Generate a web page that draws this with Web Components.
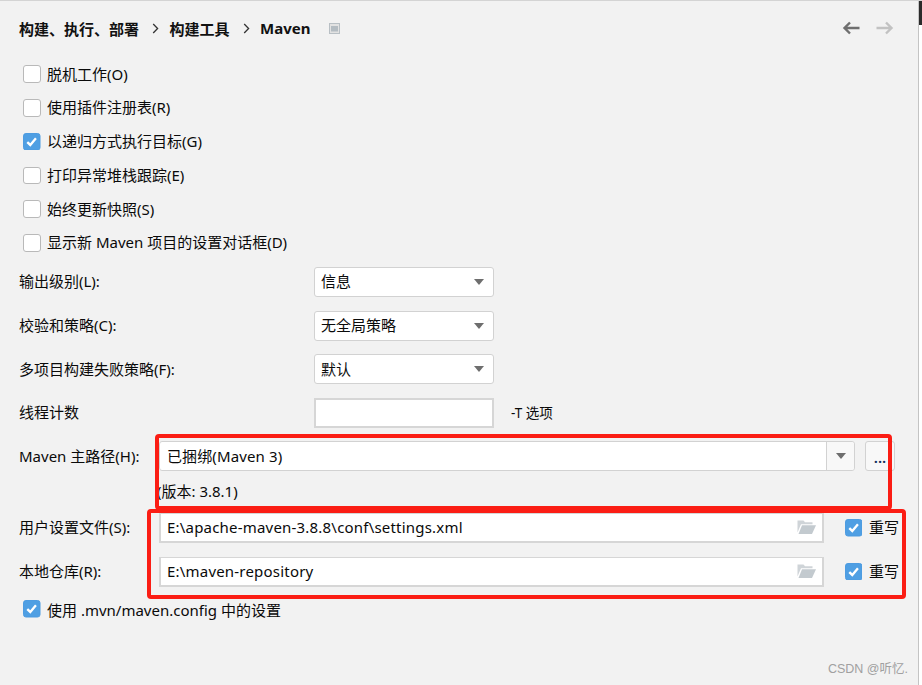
<!DOCTYPE html>
<html lang="zh"><head><meta charset="utf-8">
<style>
html,body{margin:0;padding:0;width:922px;height:685px;overflow:hidden;background:#f2f2f2}
body{font:15px "Noto Sans","Noto Sans CJK SC",sans-serif;color:#0a0a0a}
</style></head><body>
<settings-page></settings-page>
<script>
const CHECK='<svg viewBox="0 0 18 18" width="17.5" height="17.5"><rect x="0.5" y="0.5" width="17" height="17" rx="2.5" fill="#4f9fe3" stroke="#4a9ae0"/><path d="M4.4 9.3l3.1 3 5.8-6.8" fill="none" stroke="#fff" stroke-width="2.4"/></svg>';
class XCheck extends HTMLElement{
  connectedCallback(){
    const s=this.attachShadow({mode:'open'});
    const on=this.hasAttribute('checked');
    s.innerHTML=`<style>:host{display:flex;align-items:center;gap:6.5px;height:18px;white-space:nowrap}
    .b{width:17.5px;height:17.5px;flex:none;box-sizing:border-box;display:block}
    .off{background:#fff;border:1px solid #b9b9b9;border-radius:3px}
    svg{display:block}
    .x{padding-bottom:var(--tb,2px)}
    </style><span class="b ${on?'':'off'}">${on?CHECK:''}</span><span class="x"><slot></slot></span>`;
  }
}
class XCombo extends HTMLElement{
  connectedCallback(){
    const s=this.attachShadow({mode:'open'});
    s.innerHTML=`<style>:host{display:flex;box-sizing:border-box;height:30px;width:180px;background:#fff;border:1px solid #d2d2d2;border-radius:3px;align-items:center;padding:0 7px 0 6px}
    .t{flex:1;padding-bottom:2px}
    .a{width:0;height:0;border-left:5.5px solid transparent;border-right:5.5px solid transparent;border-top:6px solid #6e6e6e;margin-right:2px}
    </style><span class="t"><slot></slot></span><span class="a"></span>`;
  }
}
class XHome extends HTMLElement{
  connectedCallback(){
    const s=this.attachShadow({mode:'open'});
    s.innerHTML=`<style>:host{display:flex;box-sizing:border-box;height:30px;flex:1;background:#fff;border:1px solid #d2d2d2;border-radius:3px;align-items:stretch}
    .t{flex:1;display:flex;align-items:center;padding:0 0 2px 7px;letter-spacing:.12px}
    .d{width:27px;background:#f8f8f8;border-left:1px solid #d2d2d2;display:flex;align-items:center;justify-content:center;border-radius:0 3px 3px 0}
    .a{width:0;height:0;border-left:5.5px solid transparent;border-right:5.5px solid transparent;border-top:6px solid #6e6e6e}
    </style><span class="t"><span><slot></slot></span></span><span class="d"><span class="a"></span></span>`;
  }
}
class XPath extends HTMLElement{
  connectedCallback(){
    const s=this.attachShadow({mode:'open'});
    const plain=this.hasAttribute('plain');
    const folder=plain?'':`<svg width="19" height="14" viewBox="0 0 19 14"><path d="M0.5 13V0.5H6.5L8 2.3H15.5V4.2H4L0.5 12.5Z" fill="#cfd4d8"/><path d="M1.5 14L5 5.2H19L15 14Z" fill="#c3cacf"/></svg>`;
    s.innerHTML=`<style>:host{display:flex;box-sizing:border-box;height:30px;flex:1;background:#fff;border:1px solid #d6d6d6;border-width:${plain?'2px':'1px 2px 2px 2px'};align-items:center;padding:0 6px;letter-spacing:.2px}
    .t{flex:1}
    svg{display:block}
    </style><span class="t"><slot></slot></span>${folder}`;
  }
}
class XRow extends HTMLElement{
  connectedCallback(){
    const s=this.attachShadow({mode:'open'});
    s.innerHTML=`<style>:host{display:flex;align-items:center;height:30px}
    .l{flex:none;width:var(--label,295px);padding-bottom:2px}
    .c{flex:1;display:flex;align-items:center;min-width:0}
    </style><span class="l">${this.getAttribute('label')}</span><span class="c"><slot></slot></span>`;
  }
}
class XBreadcrumb extends HTMLElement{
  connectedCallback(){
    const s=this.attachShadow({mode:'open'});
    const chev='<svg width="7" height="11" viewBox="0 0 7 11"><path d="M1.2 1L5.6 5.5L1.2 10" fill="none" stroke="#333" stroke-width="1.3"/></svg>';
    s.innerHTML=`<style>:host{display:flex;align-items:center;height:20px;font-weight:700;font-size:15px;color:#111}
    .c{margin:0 10.5px 0 13px;display:flex}
    .p{margin-left:18.5px;display:block}
    .nav{margin-left:auto;display:flex;gap:16px;margin-right:5px}
    </style><span>构建、执行、部署</span><span class="c">${chev}</span><span>构建工具</span><span class="c">${chev}</span><span>Maven</span>
    <svg class="p" width="11" height="11" viewBox="0 0 11 11"><rect x="0.5" y="0.5" width="10" height="10" fill="#e2e2e2" stroke="#b8bfc4"/><rect x="2" y="3" width="7" height="5.5" fill="#b4bcc2"/></svg>
    <span class="nav">
    <svg width="18" height="14" viewBox="0 0 18 14"><path d="M17.5 7H2.5M8 1.5L2.5 7L8 12.5" fill="none" stroke="#6f6f6f" stroke-width="2.4"/></svg>
    <svg width="18" height="14" viewBox="0 0 18 14"><path d="M0.5 7H15.5M10 1.5L15.5 7L10 12.5" fill="none" stroke="#c2c2c2" stroke-width="2.4"/></svg>
    </span>`;
  }
}
class SettingsPage extends HTMLElement{
  connectedCallback(){
    const s=this.attachShadow({mode:'open'});
    s.innerHTML=`<style>
    :host{display:block;position:relative;box-sizing:border-box;width:922px;height:685px;border-top:1px solid #d4d4d4;background:#f2f2f2}
    .main{box-sizing:border-box;width:919px;height:684px;border-right:1px solid #c4c4c4;padding:17px 19px 0 19px}
    .edge{position:absolute;right:0;top:0;bottom:0;width:3px;background:#fff}
    .edge i{display:block;height:24px;background:#2b2b2b}
    .checks{display:flex;flex-direction:column;gap:15.8px;margin-top:27px;padding-left:4px}
    .form{display:flex;flex-direction:column;margin-top:15px;gap:13.6px}
    .opt{margin-left:17px;font-size:13.5px;padding-bottom:2px}
    .home{--label:140px}
    .btn{flex:none;width:30px;height:30px;box-sizing:border-box;margin-left:10px;background:#f8f8f8;border:1px solid #d2d2d2;border-radius:3px;display:flex;justify-content:center;align-items:flex-end;line-height:20px;padding-bottom:3px;font-weight:600;color:#12305a}
    .ver{margin:-4px 0 -1.6px 138px;height:20px;line-height:20px}
    .ov{margin-left:20.5px;flex:none}
    .last{padding-left:4px;--tb:0px}
    .r{position:absolute;box-sizing:border-box;border:4px solid #fb1d14;border-radius:4px;pointer-events:none}
    .r1{left:155px;top:433px;width:737px;height:76px}
    .r2{left:147px;top:508px;width:759px;height:90px}
    .wm{position:absolute;right:14px;bottom:8px;font:12.5px "Liberation Sans","Noto Sans CJK SC",sans-serif;color:#a0a0a0}
    </style>
    <div class="main">
      <x-breadcrumb></x-breadcrumb>
      <div class="checks">
        <x-check>脱机工作(O)</x-check>
        <x-check>使用插件注册表(R)</x-check>
        <x-check checked>以递归方式执行目标(G)</x-check>
        <x-check>打印异常堆栈跟踪(E)</x-check>
        <x-check>始终更新快照(S)</x-check>
        <x-check>显示新 Maven 项目的设置对话框(D)</x-check>
      </div>
      <div class="form">
        <x-row label="输出级别(L):"><x-combo>信息</x-combo></x-row>
        <x-row label="校验和策略(C):"><x-combo>无全局策略</x-combo></x-row>
        <x-row label="多项目构建失败策略(F):"><x-combo>默认</x-combo></x-row>
        <x-row label="线程计数"><x-path plain style="flex:none;width:180px"></x-path><span class="opt">-T 选项</span></x-row>
        <x-row class="home" label="Maven 主路径(H):"><x-home>已捆绑(Maven 3)</x-home><span class="btn">...</span><span style="width:4px;flex:none"></span></x-row>
        <div class="ver">(版本: 3.8.1)</div>
        <x-row class="home" label="用户设置文件(S):"><x-path>E:\\apache-maven-3.8.8\\conf\\settings.xml</x-path><x-check checked class="ov">重写</x-check></x-row>
        <x-row class="home" label="本地仓库(R):"><x-path>E:\\maven-repository</x-path><x-check checked class="ov">重写</x-check></x-row>
        <div class="last"><x-check checked>使用 .mvn/maven.config 中的设置</x-check></div>
      </div>
    </div>
    <div class="edge"><i></i></div>
    <div class="r r1"></div><div class="r r2"></div>
    <div class="wm">CSDN @听忆.</div>`;
  }
}
customElements.define('x-check',XCheck);
customElements.define('x-combo',XCombo);
customElements.define('x-home',XHome);
customElements.define('x-path',XPath);
customElements.define('x-row',XRow);
customElements.define('x-breadcrumb',XBreadcrumb);
customElements.define('settings-page',SettingsPage);
</script>
</body></html>
